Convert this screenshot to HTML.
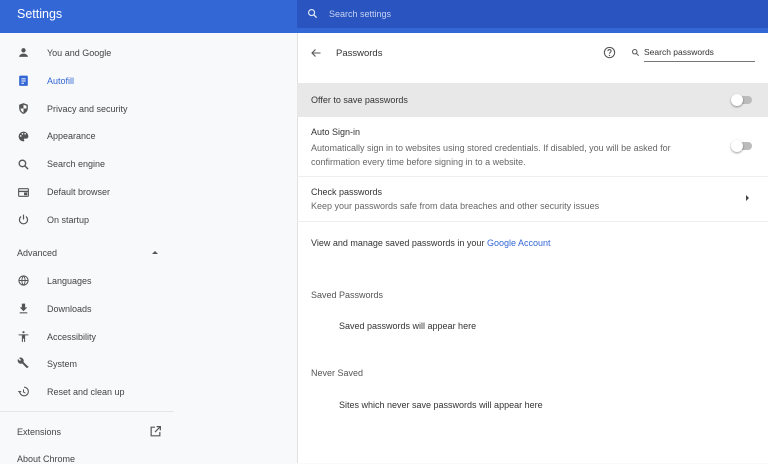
<!DOCTYPE html>
<html><head><meta charset="utf-8"><style>
*{margin:0;padding:0;box-sizing:border-box}
body{width:768px;height:463px;overflow:hidden;background:#f8f9fa;font-family:"Liberation Sans",sans-serif;color:#333;position:relative}
.a{position:absolute;white-space:nowrap}
.hdr{left:0;top:0;width:768px;height:33px;background:#3367d6}
.srch{left:297px;top:0;width:471px;height:28px;background:#2a55c0}
.side{font-size:9px;color:#444}
.ic{position:absolute;left:17px;width:13px;height:13px}
.main{left:297px;top:33px;width:471px;height:430px;background:#fff;border-left:1px solid #e0e0e0}
.t{font-size:9px;color:#333}
.s{font-size:9px;color:#666}
.tog{position:absolute;width:20px;height:8px;border-radius:4px;background:#bbb}
.tog:after{content:"";position:absolute;left:-1px;top:-2px;width:12px;height:12px;border-radius:50%;background:#fff;box-shadow:0 1px 2px rgba(0,0,0,.4)}
.hr{position:absolute;left:297px;width:471px;height:1px;background:#eee}
</style></head><body>
<div class="a hdr"></div>
<div class="a srch"></div>
<div class="a" style="left:17px;top:7px;font-size:12.5px;color:#fff">Settings</div>
<svg class="a" style="left:307px;top:8px" width="11" height="11" viewBox="0 0 24 24"><circle cx="10" cy="10" r="6.5" fill="none" stroke="#dfe6f7" stroke-width="2.6"/><path d="M15 15l6 6" stroke="#dfe6f7" stroke-width="2.8"/></svg>
<div class="a" style="left:329px;top:9px;font-size:9px;color:#c6d3f2">Search settings</div>

<div class="side">
<svg class="ic" style="top:46px" viewBox="0 0 24 24"><circle cx="12" cy="8" r="4" fill="#555"/><path d="M4 20c0-4 4-6 8-6s8 2 8 6z" fill="#555"/></svg>
<div class="a" style="left:47px;top:48px">You and Google</div>
<svg class="ic" style="top:74px" viewBox="0 0 24 24"><rect x="4" y="3" width="16" height="19" rx="2" fill="#3367d6"/><path d="M8 9h8M8 13h8M8 17h5" stroke="#fff" stroke-width="1.8"/></svg>
<div class="a" style="left:47px;top:76px;color:#3367d6">Autofill</div>
<svg class="ic" style="top:102px" viewBox="0 0 24 24"><path d="M12 2l8 3v6c0 5-3.5 9.5-8 11-4.5-1.5-8-6-8-11V5z" fill="#555"/><path d="M12 5v7H6.5c.5 3.5 2.7 6.5 5.5 7.5V12h5.5V7z" fill="#fff"/></svg>
<div class="a" style="left:47px;top:104px">Privacy and security</div>
<svg class="ic" style="top:130px" viewBox="0 0 24 24"><path d="M12 3a9 9 0 000 18c1 0 1.5-.7 1.5-1.5 0-1-.8-1.4-.8-2.2 0-.9.7-1.3 1.6-1.3H17a4 4 0 004-4c0-5-4-9-9-9z" fill="#555"/><circle cx="7" cy="11" r="1.5" fill="#fff"/><circle cx="10" cy="7" r="1.5" fill="#fff"/><circle cx="15" cy="7" r="1.5" fill="#fff"/></svg>
<div class="a" style="left:47px;top:131px">Appearance</div>
<svg class="ic" style="top:158px" viewBox="0 0 24 24"><circle cx="10" cy="10" r="6" fill="none" stroke="#555" stroke-width="2.4"/><path d="M14.5 14.5l6 6" stroke="#555" stroke-width="2.6"/></svg>
<div class="a" style="left:47px;top:159px">Search engine</div>
<svg class="ic" style="top:186px" viewBox="0 0 24 24"><rect x="3" y="5" width="18" height="14" rx="1" fill="none" stroke="#555" stroke-width="2"/><path d="M3 10h18" stroke="#555" stroke-width="2.5"/><rect x="13" y="12" width="6" height="5" fill="#555"/></svg>
<div class="a" style="left:47px;top:187px">Default browser</div>
<svg class="ic" style="top:213px" viewBox="0 0 24 24"><path d="M12 3v9" stroke="#555" stroke-width="2.2"/><path d="M7.5 6.5a7.5 7.5 0 109 0" fill="none" stroke="#555" stroke-width="2.2"/></svg>
<div class="a" style="left:47px;top:215px">On startup</div>
<div class="a" style="left:17px;top:248px">Advanced</div>
<div class="a" style="left:152px;top:251px;width:0;height:0;border-left:3px solid transparent;border-right:3px solid transparent;border-bottom:3px solid #555"></div>
<svg class="ic" style="top:274px" viewBox="0 0 24 24"><circle cx="12" cy="12" r="8.5" fill="none" stroke="#555" stroke-width="2"/><path d="M3.5 12h17M12 3.5c-4 4-4 13 0 17M12 3.5c4 4 4 13 0 17" fill="none" stroke="#555" stroke-width="1.7"/></svg>
<div class="a" style="left:47px;top:276px">Languages</div>
<svg class="ic" style="top:302px" viewBox="0 0 24 24"><path d="M9 3h6v7h4l-7 7-7-7h4z" fill="#555"/><rect x="5" y="19" width="14" height="2" fill="#555"/></svg>
<div class="a" style="left:47px;top:304px">Downloads</div>
<svg class="ic" style="top:330px" viewBox="0 0 24 24"><circle cx="12" cy="4" r="2" fill="#555"/><path d="M3 8h18v2h-6v12h-2v-6h-2v6H9V10H3z" fill="#555"/></svg>
<div class="a" style="left:47px;top:332px">Accessibility</div>
<svg class="ic" style="top:357px" viewBox="0 0 24 24"><path d="M21 18l-9-9c1-2.5.4-5.3-1.6-7.2C8.3-.3 5.3-.6 3 .8l4 4L5 7 1 3c-1.4 2.3-1 5.3 1 7.4 2 2 4.8 2.6 7.3 1.6l9 9c.4.4 1 .4 1.4 0l2.3-2.3c.4-.4.4-1 0-1.4z" fill="#555" transform="translate(1 1) scale(.92)"/></svg>
<div class="a" style="left:47px;top:359px">System</div>
<svg class="ic" style="top:385px" viewBox="0 0 24 24"><path d="M5 12a8 8 0 108-8" fill="none" stroke="#555" stroke-width="2"/><path d="M1.5 11L5 15l3.5-4z" fill="#555"/><path d="M12 8v5l3.5 2" fill="none" stroke="#555" stroke-width="1.8"/></svg>
<div class="a" style="left:47px;top:387px">Reset and clean up</div>
<div class="a" style="left:0;top:411px;width:174px;height:1px;background:#e5e5e5"></div>
<div class="a" style="left:17px;top:427px">Extensions</div>
<svg class="a" style="left:149px;top:425px" width="13" height="13" viewBox="0 0 24 24"><path d="M11 4H4v16h16v-7" fill="none" stroke="#555" stroke-width="2.2"/><path d="M14 3h7v7M21 3L11 13" fill="none" stroke="#555" stroke-width="2.2"/></svg>
<div class="a" style="left:17px;top:454px">About Chrome</div>
</div>

<div class="a main"></div>
<svg class="a" style="left:310px;top:47px" width="12" height="12" viewBox="0 0 24 24"><path d="M21 12H5M11 5l-7 7 7 7" fill="none" stroke="#555" stroke-width="2.2"/></svg>
<div class="a t" style="left:336px;top:48px;font-size:9.5px">Passwords</div>
<svg class="a" style="left:603px;top:46px" width="13" height="13" viewBox="0 0 24 24"><circle cx="12" cy="12" r="9.5" fill="none" stroke="#555" stroke-width="2"/><path d="M9 9.5a3 3 0 116 0c0 2-3 2.3-3 4.5" fill="none" stroke="#555" stroke-width="2"/><circle cx="12" cy="17.5" r="1.3" fill="#555"/></svg>
<svg class="a" style="left:631px;top:48px" width="9" height="9" viewBox="0 0 24 24"><circle cx="10" cy="10" r="6" fill="none" stroke="#555" stroke-width="2.6"/><path d="M14.5 14.5l6 6" stroke="#555" stroke-width="2.8"/></svg>
<div class="a" style="left:644px;top:47px;font-size:8.5px;color:#333">Search passwords</div>
<div class="a" style="left:644px;top:61px;width:111px;height:1px;background:#777"></div>

<div class="a" style="left:297px;top:83px;width:471px;height:34px;background:#e8e8e8"></div>
<div class="a t" style="left:311px;top:95px">Offer to save passwords</div>
<div class="tog" style="left:732px;top:96px"></div>
<div class="a t" style="left:311px;top:127px">Auto Sign-in</div>
<div class="a s" style="left:311px;top:141px;line-height:14px">Automatically sign in to websites using stored credentials. If disabled, you will be asked for<br>confirmation every time before signing in to a website.</div>
<div class="tog" style="left:732px;top:142px"></div>
<div class="hr" style="top:176px"></div>
<div class="a t" style="left:311px;top:187px">Check passwords</div>
<div class="a s" style="left:311px;top:201px">Keep your passwords safe from data breaches and other security issues</div>
<div class="a" style="left:746px;top:195px;width:0;height:0;border-top:3px solid transparent;border-bottom:3px solid transparent;border-left:3.5px solid #444"></div>
<div class="hr" style="top:221px"></div>
<div class="a t" style="left:311px;top:238px">View and manage saved passwords in your <span style="color:#3367d6">Google Account</span></div>
<div class="a t" style="left:311px;top:290px;color:#555">Saved Passwords</div>
<div class="a t" style="left:339px;top:321px">Saved passwords will appear here</div>
<div class="a t" style="left:311px;top:368px;color:#555">Never Saved</div>
<div class="a t" style="left:339px;top:400px">Sites which never save passwords will appear here</div>
</body></html>
